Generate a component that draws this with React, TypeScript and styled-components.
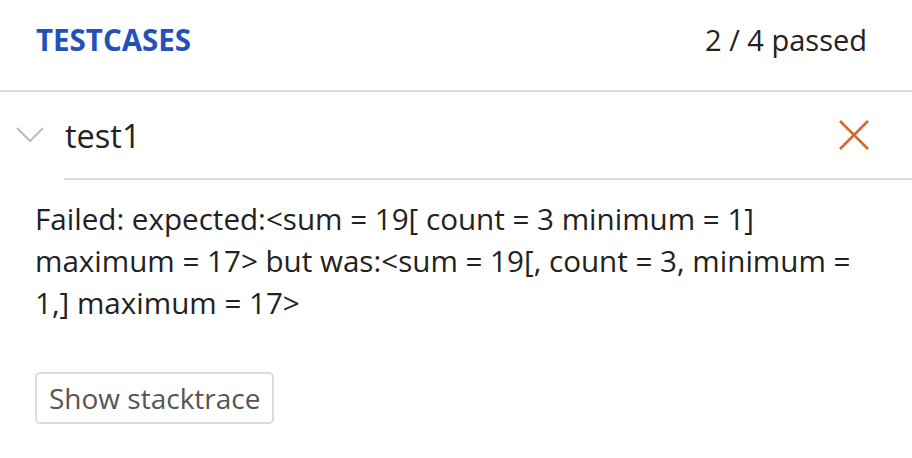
import React from 'react';
import styled, { createGlobalStyle } from 'styled-components';

const Global = createGlobalStyle`
  html, body { margin: 0; padding: 0; background: #fff; }
  body { font-family: "Open Sans", "Noto Sans", sans-serif; color: #222; }
`;

const Panel = styled.div`
  width: 912px;
  height: 458px;
  overflow: hidden;
`;

const Header = styled.div`
  display: flex;
  align-items: center;
  justify-content: space-between;
  height: 78px;
  padding: 0 45px 12px 36px;
  border-bottom: 2px solid #dcdcdc;
`;

const Title = styled.div`
  font-size: 29.5px;
  font-weight: 700;
  color: #2450b9;
`;

const Count = styled.div`
  font-size: 29px;
  color: #222;
`;

const CaseRow = styled.div`
  display: flex;
  align-items: center;
  height: 86px;
  padding: 0 43px 0 16px;
`;

const Chevron = styled.svg`
  width: 28px;
  height: 16px;
  margin: 0 21px 0 0;
  flex: none;
`;

const CaseName = styled.div`
  flex: 1;
  font-size: 32.5px;
  color: #222;
`;

const Divider = styled.div`
  margin-left: 64px;
  border-top: 2px solid #dcdcdc;
`;

const Message = styled.div`
  padding: 18px 40px 0 35px;
  font-size: 29.6px;
  line-height: 42px;
  color: #222;
`;

const StackButton = styled.button`
  margin: 48px 0 0 35px;
  height: 52px;
  padding: 0 12px;
  border: 2px solid #dcdcdc;
  border-radius: 5px;
  background: #fff;
  font-family: "Open Sans", "Noto Sans", sans-serif;
  font-size: 28px;
  color: #555;
`;

export default function App() {
  return (
    <Panel>
      <Global />
      <Header>
        <Title>TESTCASES</Title>
        <Count>2 / 4 passed</Count>
      </Header>
      <CaseRow>
        <Chevron viewBox="0 0 28 16">
          <polyline points="1,1 14,14 27,1" fill="none" stroke="#bcbcbc" strokeWidth="2" />
        </Chevron>
        <CaseName>test1</CaseName>
        <svg width="30" height="30" viewBox="0 0 30 30">
          <path d="M1 1 L29 29 M29 1 L1 29" stroke="#d4692a" strokeWidth="2.6" />
        </svg>
      </CaseRow>
      <Divider />
      <Message>
        Failed: expected:&lt;sum = 19[ count = 3 minimum = 1] maximum = 17&gt; but was:&lt;sum = 19[, count = 3, minimum = 1,] maximum = 17&gt;
      </Message>
      <StackButton>Show stacktrace</StackButton>
    </Panel>
  );
}
